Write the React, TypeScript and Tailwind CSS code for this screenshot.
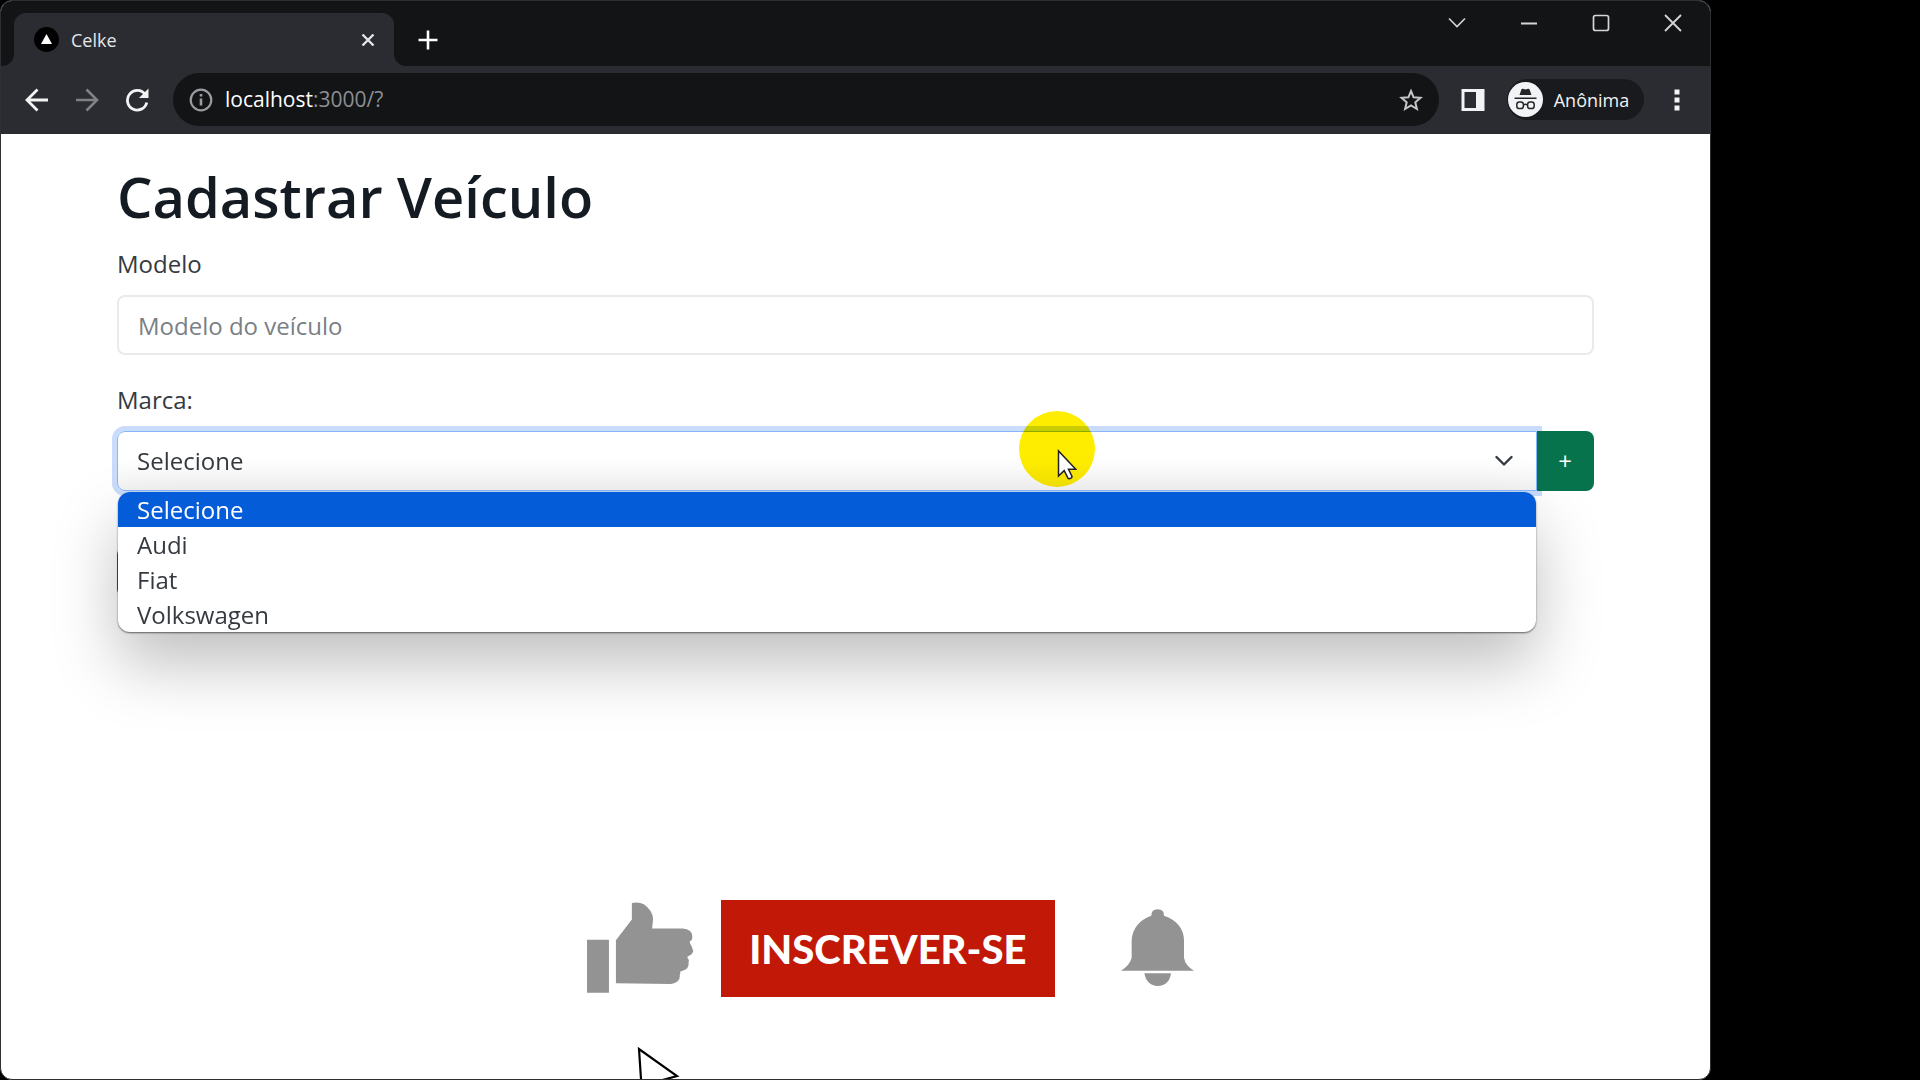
import { ReactNode, useState } from "react"

const brands = ["Selecione", "Audi", "Fiat", "Volkswagen"]

function Icon({ size, box, className = "", children }: { size: number, box: string, className?: string, children: ReactNode }) {
    return (
        <svg width={size} height={size} viewBox={box} fill="none" stroke="currentColor" aria-hidden="true" className={className}>
            {children}
        </svg>
    )
}

function TitleBar() {
    return (
        <div className="flex justify-between bg-[#121416] h-[65px]">
            <div className="flex items-end">
                <div className="h-[53px] w-[13px] bg-[#2b2c31]">
                    <div className="h-full rounded-br-xl bg-[#121416]"></div>
                </div>
                <div className="flex items-center h-[53px] w-[380px] pl-5 pr-[14px] rounded-t-xl bg-[#2b2c31]">
                    <Icon size={25} box="0 0 25 25">
                        <circle cx="12.5" cy="12.5" r="12.5" fill="#000" stroke="none" />
                        <path d="M12.5 7 18 17H7z" fill="#fff" stroke="none" />
                    </Icon>
                    <span className="ml-3 text-lg font-medium text-[#e4e6ea]">Celke</span>
                    <button aria-label="Fechar guia" className="ml-auto p-1 text-[#e4e6ea]">
                        <Icon size={16} box="0 0 16 16">
                            <path d="M2.5 2.500l11 11M13.500 2.500l-11 11" strokeWidth="2.400" />
                        </Icon>
                    </button>
                </div>
                <div className="h-[53px] w-3 bg-[#2b2c31]">
                    <div className="h-full rounded-bl-xl bg-[#121416]"></div>
                </div>
                <button aria-label="Nova guia" className="h-[53px] px-3 text-white">
                    <Icon size={20} box="0 0 20 20">
                        <path d="M10 .5v19M.5 10h19" strokeWidth="2.6" />
                    </Icon>
                </button>
            </div>
            <div className="flex text-[#d5d5d5] h-[43px] pr-px">
                <button aria-label="Pesquisar guias" className="w-[72px] flex items-center justify-center">
                    <Icon size={18} box="0 0 18 18">
                        <path d="M1 4.500l8 8 8-8" strokeWidth="1.600" />
                    </Icon>
                </button>
                <button aria-label="Minimizar" className="w-[72px] flex items-center justify-center">
                    <Icon size={18} box="0 0 18 18">
                        <path d="M1 9.500h16" strokeWidth="1.800" />
                    </Icon>
                </button>
                <button aria-label="Maximizar" className="w-[72px] flex items-center justify-center">
                    <Icon size={18} box="0 0 18 18">
                        <rect x="1.500" y="1.500" width="15" height="15" rx="2" strokeWidth="1.700" />
                    </Icon>
                </button>
                <button aria-label="Fechar" className="w-[72px] flex items-center justify-center">
                    <Icon size={18} box="0 0 18 18">
                        <path d="M1 1l16 16M17 1L1 17" strokeWidth="1.800" />
                    </Icon>
                </button>
            </div>
        </div>
    )
}

function Toolbar() {
    return (
        <div className="flex items-center bg-[#2b2c31] h-[68px] pb-px pl-[11px] text-[#f1f3f4]">
            <button aria-label="Voltar" className="w-[50px] flex justify-center">
                <Icon size={24} box="0 0 24 24">
                    <path d="M23 12H3M12.500 1.500L2 12l10.500 10.500" strokeWidth="2.800" />
                </Icon>
            </button>
            <button aria-label="Avançar" className="w-[50px] flex justify-center text-[#808185]">
                <Icon size={24} box="0 0 24 24">
                    <path d="M1 12h20M11.500 1.500L22 12 11.500 22.500" strokeWidth="2.600" />
                </Icon>
            </button>
            <button aria-label="Recarregar" className="w-[50px] flex justify-center">
                <Icon size={24} box="0 0 24 24">
                    <path d="M20.200 6.500A9.800 9.800 0 1 0 21.800 14.500" strokeWidth="2.800" />
                    <path d="M23.500.5v9.500H14z" fill="currentColor" stroke="none" />
                </Icon>
            </button>
            <div className="flex items-center flex-1 h-[53px] ml-[11px] px-4 rounded-full bg-[#121416]">
                <Icon size={24} box="0 0 24 24" className="text-[#9a9ca0]">
                    <circle cx="12" cy="12" r="10.300" strokeWidth="2.200" />
                    <path d="M12 10.500v7M12 6v2.500" strokeWidth="2.600" />
                </Icon>
                <div className="relative flex-1 ml-3 text-[21px]">
                    <div className="text-[#8d8f93]"><span className="text-white">localhost</span>:3000/?</div>
                    <input aria-label="Endereço" className="absolute inset-0 w-full bg-transparent outline-none" />
                </div>
                <button aria-label="Favoritar" className="text-[#c4c6ca]">
                    <Icon size={24} box="0 0 24 24">
                        <path d="M12 3l2.600 6.300 6.900.5-5.200 4.500 1.600 6.700-5.900-3.600L6.100 21l1.600-6.700L2.500 9.800l6.900-.5z" strokeWidth="2" />
                    </Icon>
                </button>
            </div>
            <button aria-label="Painel lateral" className="w-[68px] flex justify-center">
                <Icon size={24} box="0 0 24 24">
                    <path d="M.5 1h23v22H.5zM3.500 4v16H15V4z" fill="currentColor" fillRule="evenodd" stroke="none" />
                </Icon>
            </button>
            <button className="flex items-center h-[41px] w-[137px] rounded-full bg-[#191a1d] text-lg font-medium">
                <Icon size={37} box="0 0 37 37">
                    <circle cx="18.500" cy="18.500" r="17.500" fill="#f1f3f4" stroke="none" />
                    <path d="M12.500 14l1.900-5.600q.5-1 1.500-.7l2.600.8 2.600-.8q1-.3 1.500.7l1.900 5.600z" fill="#25262a" stroke="none" />
                    <path d="M7.500 17.300h22" stroke="#25262a" strokeWidth="1.600" />
                    <rect x="9.800" y="21" width="6.600" height="6.600" rx="2.600" stroke="#25262a" strokeWidth="1.500" />
                    <rect x="20.600" y="21" width="6.600" height="6.600" rx="2.600" stroke="#25262a" strokeWidth="1.500" />
                    <path d="M16.400 24q2.100-1.400 4.200 0" stroke="#25262a" strokeWidth="1.400" />
                </Icon>
                <span className="ml-2.5">Anônima</span>
            </button>
            <button aria-label="Menu" className="w-[66px] flex justify-center">
                <Icon size={24} box="0 0 24 24">
                    <path d="M9.500 1.500h5v5h-5zM9.500 9.500h5v5h-5zM9.500 17.500h5v5h-5z" fill="currentColor" stroke="none" />
                </Icon>
            </button>
        </div>
    )
}

function BrandSelect() {
    const [brand, setBrand] = useState(brands[0])

    return (
        <div className="relative z-10 flex-1">
            <select
                id="marca"
                value={brand}
                onChange={(e) => setBrand(e.target.value)}
                className="block appearance-none w-full h-[60px] px-[19px] rounded-l-lg border border-[#86b7fe] bg-gradient-to-b from-white from-50% to-[#f3f3f3] ring-5 ring-[#c9dcfb] outline-none"
            >
                {brands.map((b) => <option key={b}>{b}</option>)}
            </select>
            <Icon size={18} box="0 0 18 18" className="absolute right-6 top-[21px] pointer-events-none text-[#343a40]">
                <path d="M1.500 5l7.500 7.500L16.500 5" strokeWidth="2.400" strokeLinecap="round" strokeLinejoin="round" />
            </Icon>
            <ul className="absolute top-full left-px right-px mt-px overflow-hidden rounded-xl bg-white shadow-[0_1px_2px_#00000090,0_32px_64px_#00000040]">
                {
                    brands.map((b) => (
                        <li key={b}
                            className={`h-[35px] px-[19px] leading-[35px] ${b === brand ? "bg-[#045cd9] text-white" : ""}`} >
                            {b}
                        </li>
                    ))
                }
            </ul>
            <div className="absolute left-[902px] -top-5 size-[76px] rounded-full bg-[#ffed00] mix-blend-multiply pointer-events-none"></div>
            <svg width="20" height="31" viewBox="0 0 20 31" className="absolute left-[940px] top-[18px] pointer-events-none" aria-hidden="true">
                <path d="M1.500 2v25l5.700-5.400 4 8q3.600.3 3.800-2.200l-3.500-7.100h7.300z" fill="#fff" stroke="#222" strokeWidth="1.500" />
            </svg>
        </div>
    )
}

function SubscribeBar() {
    return (
        <div className="relative flex justify-center mt-auto pl-[70px] pb-[82px] text-[#939393]">
            <button aria-label="Gostei" className="mr-[27px] self-start pt-0.5">
                <svg width="107" height="91" viewBox="51 66 322 274" fill="currentColor" aria-hidden="true">
                    <path d="M51 180h66v159H51zM138 181l48-62V69q20-5 36 4 26 18 28 44l-3 29h92q28 3 29 22l-1 12-7 5q1 7 6 14l5 15-5 9-13 8q1 7 5 10-2 8-1 13-2 12-11 16l-15 6q2 6-1 10 3 22-26 27l-166-2z" />
                </svg>
            </button>
            <button className="h-[97px] w-[334px] pt-0.5 bg-[#c21807] text-white font-black text-[40px] font-[Lato,sans-serif]">INSCREVER-SE</button>
            <button aria-label="Notificações" className="ml-[66px] self-start pt-[9px]">
                <svg width="73" height="77" viewBox="723 86 219 231" fill="currentColor" aria-hidden="true">
                    <path d="M814 106q0-19 19-19t19 19q58 20 60 73v53q4 24 30 39H723q27-17 32-39v-53q4-53 59-73zM793 279h80q-5 37-40 38-33-1-40-38z" />
                </svg>
            </button>
            <svg width="44" height="50" viewBox="0 0 44 50" className="absolute left-[635px] -bottom-[18px] pointer-events-none" aria-hidden="true">
                <path d="M3 2l3 45 10-11 25-7z" fill="#fff" stroke="#000" strokeWidth="2.200" />
            </svg>
        </div>
    )
}

export default function App() {
    return (
        <div className="min-h-screen bg-black font-['Open_Sans','Noto_Sans',sans-serif]">
            <div className="flex flex-col w-[89.1%] min-h-screen overflow-hidden rounded-xl border border-[#2f3033] bg-white">
                <TitleBar />
                <Toolbar />
                <main className="flex flex-col flex-1 pt-[26px] text-2xl text-[#343a40]">
                    <form className="px-[116px]">
                        <h1 className="mb-[14px] text-[56px] leading-[72px] font-semibold text-[#151b22]">Cadastrar Veículo</h1>
                        <label htmlFor="modelo" className="block mb-[13px] leading-9">Modelo</label>
                        <input
                            id="modelo"
                            placeholder="Modelo do veículo"
                            className="block w-full h-[60px] mb-[27px] px-[19px] rounded-lg border-2 border-[#e9eaec] placeholder:text-[#7a7f85] outline-none"
                        />
                        <label htmlFor="marca" className="block mb-[13px] leading-9">Marca:</label>
                        <div className="flex">
                            <BrandSelect />
                            <button type="button" className="relative z-10 w-[57px] rounded-r-lg bg-[#06734c] text-white text-2xl">+</button>
                        </div>
                        <button type="submit" aria-label="Cadastrar" className="block w-36 h-[50px] mt-14 rounded-lg bg-[#06734c]"></button>
                    </form>
                    <SubscribeBar />
                </main>
            </div>
        </div>
    )
}
